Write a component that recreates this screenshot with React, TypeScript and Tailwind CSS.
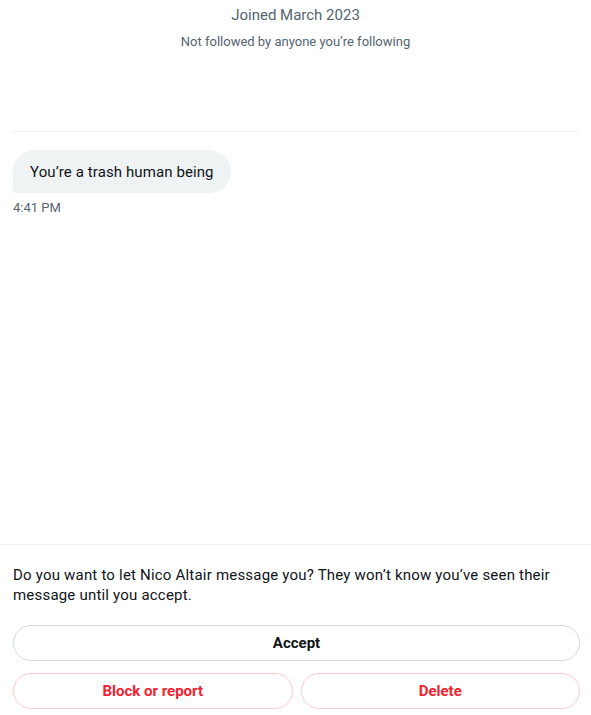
import React from "react";

const font = { fontFamily: 'Roboto, "Noto Sans", "Liberation Sans", sans-serif' };

export default function App() {
  return (
    <div className="flex h-[715px] w-[591px] flex-col bg-white text-[#0f1419]" style={font}>
      {/* profile summary */}
      <div className="flex flex-col items-center pt-[5px]">
        <div className="text-[15px] leading-5 text-[#536471]">Joined March 2023</div>
        <div className="mt-[9px] text-[13px] leading-4 text-[#536471]">
          Not followed by anyone you’re following
        </div>
      </div>
      <div className="mx-3 mt-[81px] h-px bg-[#eff3f4]" />

      {/* conversation */}
      <div className="flex flex-col items-start px-[13px] pt-[18px]">
        <div className="rounded-3xl rounded-bl-[4px] bg-[#eff3f4] px-[17px] pt-[12px] pb-[11px] text-[15px] leading-5 tracking-[0.1px]">
          You’re a trash human being
        </div>
        <div className="mt-[7px] text-[13px] leading-4 text-[#536471]">4:41 PM</div>
      </div>

      <div className="flex-1" />

      {/* message request */}
      <div className="border-t border-[#eff3f4] pl-[13px] pr-[11px] pt-5 pb-[6px]">
        <p className="text-[15px] leading-5 tracking-[0.2px]">
          Do you want to let Nico Altair message you? They won’t know you’ve seen their message
          until you accept.
        </p>
        <button className="mt-5 flex h-9 w-full items-center justify-center rounded-full border border-[#cfd9de] text-[15px] font-bold">
          Accept
        </button>
        <div className="mt-3 grid grid-cols-2 gap-2">
          <button className="flex h-9 items-center justify-center rounded-full border border-[#fdc9ce] text-[15px] font-bold text-[#f4212e]">
            Block or report
          </button>
          <button className="flex h-9 items-center justify-center rounded-full border border-[#fdc9ce] text-[15px] font-bold text-[#f4212e]">
            Delete
          </button>
        </div>
      </div>
    </div>
  );
}
